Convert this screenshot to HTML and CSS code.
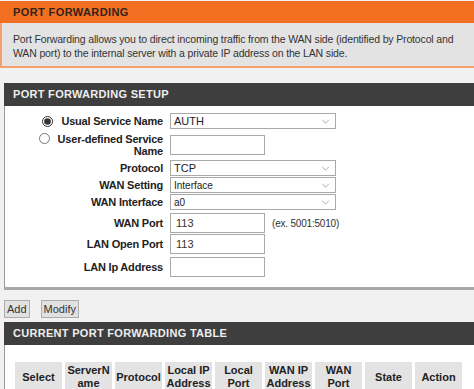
FILE: index.html
```html
<!DOCTYPE html>
<html lang="en">
<head>
  <meta charset="UTF-8">
  <title>Port Forwarding</title>
  <link rel="stylesheet" href="styles.css">
</head>
<body>
  <div class="intro">
    <div class="intro-title">PORT FORWARDING</div>
    <div class="intro-text">
      Port Forwarding allows you to direct incoming traffic from the WAN side (identified by Protocol and
      WAN port) to the internal server with a private IP address on the LAN side.
    </div>
  </div>

  <div class="section">
    <div class="section-title">PORT FORWARDING SETUP</div>
    <div class="section-body">
      <div class="form-grid">
        <label class="field-label">
          <input type="radio" name="svc" class="radio" checked>
          <span>Usual Service Name</span>
        </label>
        <div class="select-wrap">
          <select><option>AUTH</option></select>
          <svg class="chevron" viewBox="0 0 10 6"><path d="M1 1 L5 5 L9 1" /></svg>
        </div>

        <label class="field-label two-line">
          <input type="radio" name="svc" class="radio">
          <span>User-defined Service<br>Name</span>
        </label>
        <div><input type="text" class="text-input"></div>

        <div class="field-label">Protocol</div>
        <div class="select-wrap">
          <select><option>TCP</option></select>
          <svg class="chevron" viewBox="0 0 10 6"><path d="M1 1 L5 5 L9 1" /></svg>
        </div>

        <div class="field-label">WAN Setting</div>
        <div class="select-wrap">
          <select class="small"><option>Interface</option></select>
          <svg class="chevron" viewBox="0 0 10 6"><path d="M1 1 L5 5 L9 1" /></svg>
        </div>

        <div class="field-label">WAN Interface</div>
        <div class="select-wrap">
          <select class="small"><option>a0</option></select>
          <svg class="chevron" viewBox="0 0 10 6"><path d="M1 1 L5 5 L9 1" /></svg>
        </div>

        <div class="field-label spaced">WAN Port</div>
        <div class="with-hint spaced">
          <input type="text" class="text-input" value="113">
          <span class="hint">(ex. 5001:5010)</span>
        </div>

        <div class="field-label">LAN Open Port</div>
        <div><input type="text" class="text-input" value="113"></div>

        <div class="field-label spaced">LAN Ip Address</div>
        <div class="spaced"><input type="text" class="text-input"></div>
      </div>
    </div>
  </div>

  <div class="actions">
    <button class="btn">Add</button>
    <button class="btn">Modify</button>
  </div>

  <div class="section">
    <div class="section-title">CURRENT PORT FORWARDING TABLE</div>
    <div class="section-body table-body">
      <table class="rules">
        <tr>
          <th>Select</th>
          <th>ServerN<br>ame</th>
          <th>Protocol</th>
          <th>Local IP<br>Address</th>
          <th>Local<br>Port</th>
          <th>WAN IP<br>Address</th>
          <th>WAN<br>Port</th>
          <th>State</th>
          <th>Action</th>
        </tr>
      </table>
    </div>
  </div>
</body>
</html>
```

FILE: styles.css
```css
body {
  margin: 0;
  background: #f1f1f1;
  font-family: 'Liberation Sans', Arial, sans-serif;
  font-size: 11px;
  color: #222;
}
/* Top intro block */
.intro {
  margin-top: 1px;
}
.intro-title {
  background: #f26f22;
  color: #33231a;
  font-weight: bold;
  font-size: 11px;
  letter-spacing: 0.4px;
  height: 22px;
  line-height: 22px;
  padding-left: 13px;
}
.intro-text {
  background: #e3e3e3;
  border-left: 2px solid #f3a06a;
  border-bottom: 2px solid #f3a06a;
  padding: 9px 0 6px 11px;
  font-size: 10.5px;
  letter-spacing: -0.15px;
  line-height: 14px;
  color: #333;
}
/* Sections */
.section {
  margin-top: 15px;
}
.section-title {
  background: #3e3e3e;
  color: #eee;
  font-weight: bold;
  font-size: 11px;
  letter-spacing: 0.3px;
  height: 23px;
  line-height: 23px;
  margin-left: 4px;
  padding-left: 9px;
}
.section-body {
  background: #fff;
  margin-left: 4px;
  border-left: 1px solid #999;
  border-bottom: 3px solid #a8a8a8;
  padding: 7px 0 10px;
}
.form-grid {
  display: grid;
  grid-template-columns: 158px 1fr;
  column-gap: 7px;
  row-gap: 1px;
  align-items: center;
}
.field-label {
  display: flex;
  justify-content: flex-end;
  align-items: center;
  gap: 8px;
  font-weight: bold;
  font-size: 11px;
  letter-spacing: -0.2px;
  text-align: right;
  line-height: 12px;
}
.two-line {
  align-items: flex-start;
  height: 29px;
  padding-top: 3px;
  box-sizing: border-box;
}
.spaced {
  margin-top: 2px;
}
.radio {
  margin: 0;
  width: 11px;
  height: 11px;
  accent-color: #333;
}
.select-wrap {
  position: relative;
  width: 166px;
}
.select-wrap select {
  appearance: none;
  -webkit-appearance: none;
  display: block;
  width: 100%;
  height: 16px;
  border: 1px solid #a9a9a9;
  background: #fff;
  font-family: inherit;
  font-size: 11px;
  color: #222;
  padding: 0 3px;
  margin: 0;
  border-radius: 0;
}
.select-wrap select.small {
  font-size: 10px;
}
.chevron {
  position: absolute;
  right: 6px;
  top: 6px;
  width: 9px;
  height: 5px;
  fill: none;
  stroke: #999;
  stroke-width: 1;
  pointer-events: none;
}
.text-input {
  display: block;
  width: 95px;
  height: 20px;
  box-sizing: border-box;
  border: 1px solid #a9a9a9;
  font-family: inherit;
  font-size: 11px;
  color: #333;
  padding: 0 5px;
  margin: 0;
}
.with-hint {
  display: flex;
  align-items: center;
  gap: 7px;
}
.hint {
  color: #333;
  font-size: 10px;
  letter-spacing: -0.2px;
}
/* Buttons */
.actions {
  display: flex;
  gap: 11px;
  margin: 10px 0 0 4px;
}
.btn {
  height: 18px;
  padding: 0 2px;
  background: #e1e1e1;
  border: 1px solid #adadad;
  border-radius: 0;
  font-family: inherit;
  font-size: 11px;
  color: #333;
}
.actions + .section {
  margin-top: 4px;
}
/* Table */
.table-body {
  padding: 14px 0 0 7px;
  border-bottom: 0;
}
.rules {
  border-spacing: 3px;
}
.rules th {
  background: #e3e3e3;
  font-size: 11px;
  font-weight: bold;
  line-height: 13px;
  width: 47px;
  height: 30px;
  padding: 0;
  text-align: center;
}
```
